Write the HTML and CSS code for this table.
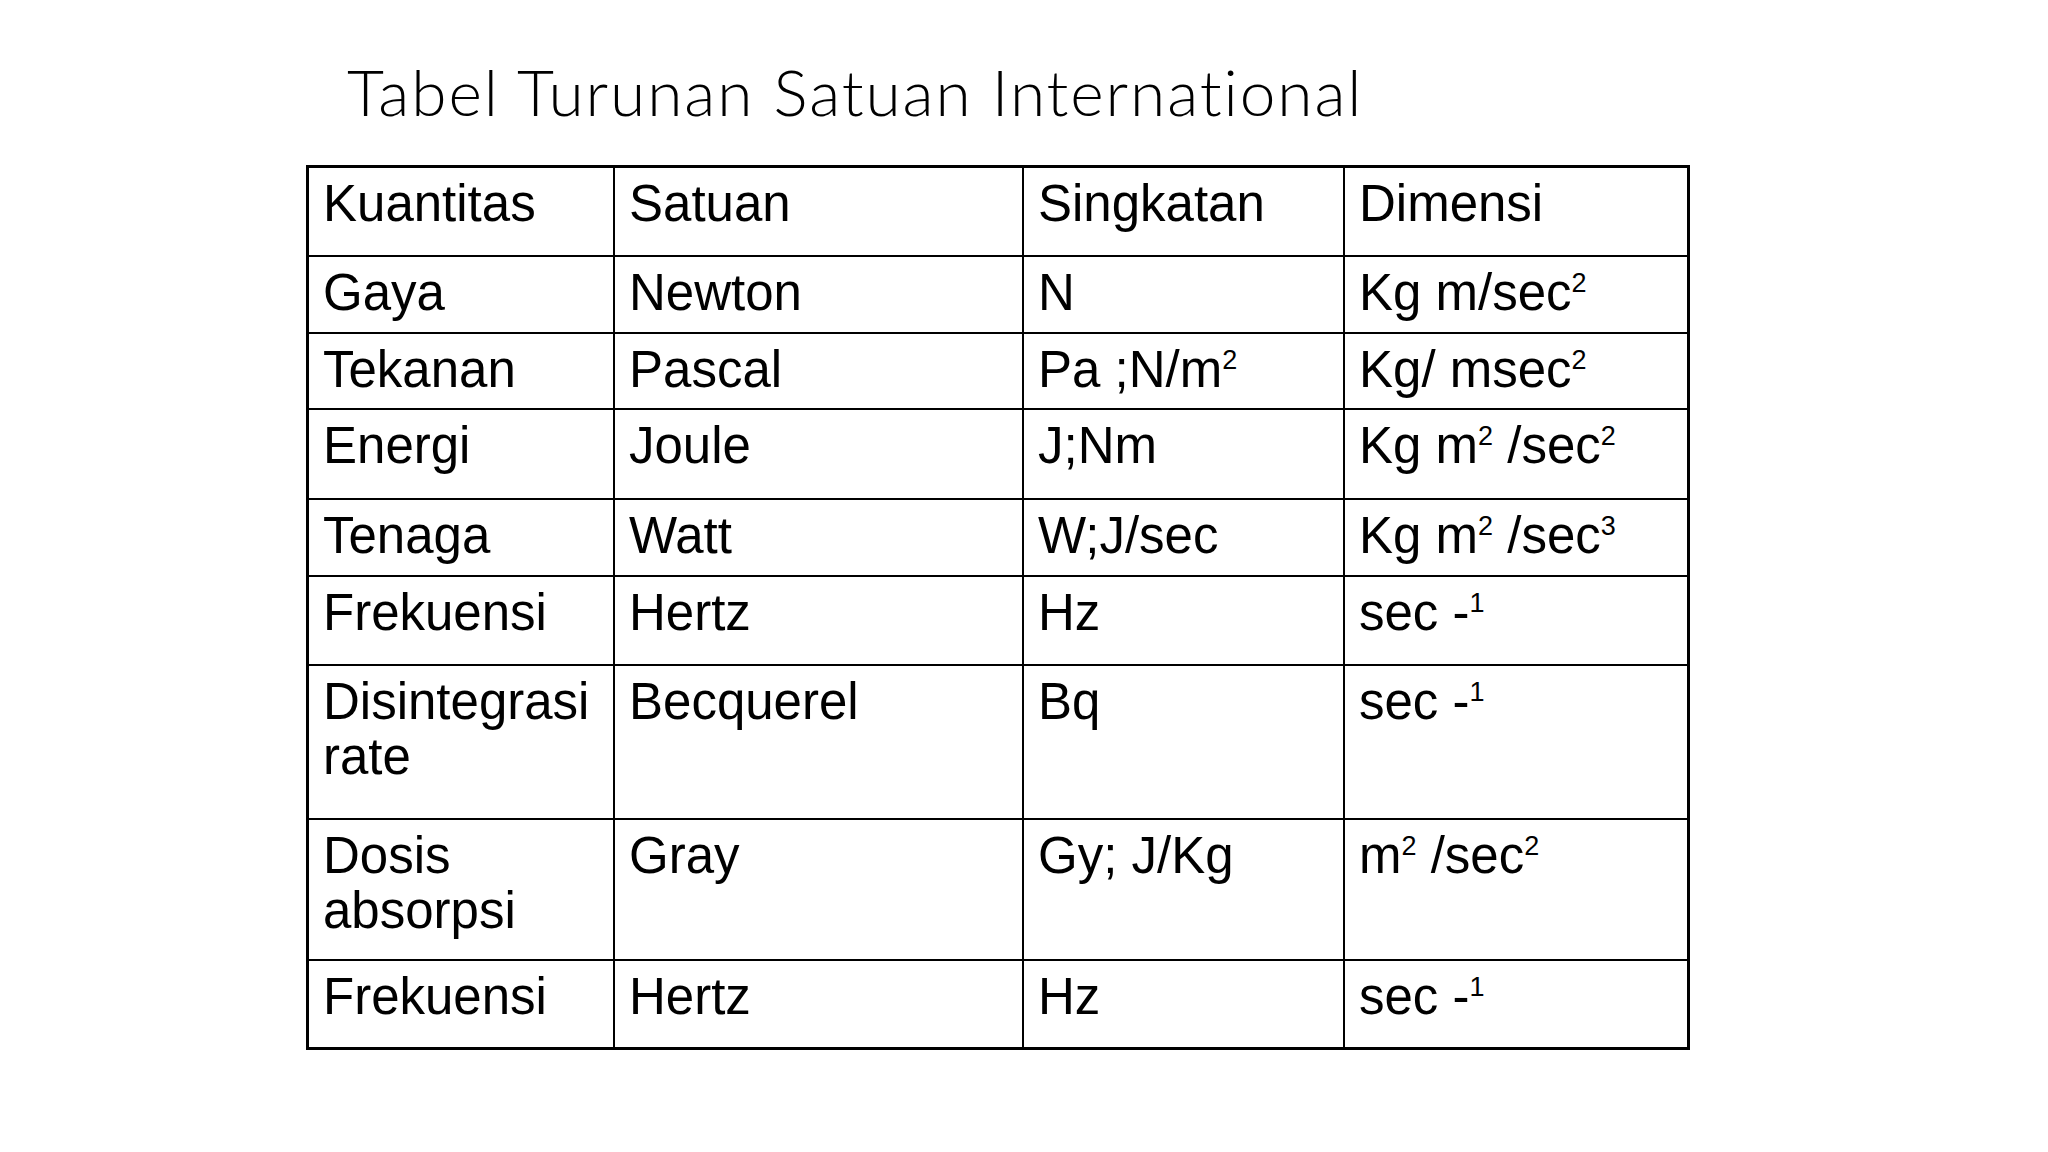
FILE: index.html
```html
<!DOCTYPE html>
<html lang="id">
<head>
<meta charset="utf-8">
<title>Tabel Turunan Satuan International</title>
<link rel="stylesheet" href="styles.css">
</head>
<body>
<main class="slide">
  <h1 class="title">Tabel Turunan Satuan International</h1>
  <div class="table">
    <div class="cell">Kuantitas</div><div class="cell">Satuan</div><div class="cell">Singkatan</div><div class="cell">Dimensi</div>
    <div class="cell">Gaya</div><div class="cell">Newton</div><div class="cell">N</div><div class="cell">Kg m/sec<sup>2</sup></div>
    <div class="cell">Tekanan</div><div class="cell">Pascal</div><div class="cell">Pa ;N/m<sup>2</sup></div><div class="cell">Kg/ msec<sup>2</sup></div>
    <div class="cell">Energi</div><div class="cell">Joule</div><div class="cell">J;Nm</div><div class="cell">Kg m<sup>2</sup> /sec<sup>2</sup></div>
    <div class="cell">Tenaga</div><div class="cell">Watt</div><div class="cell">W;J/sec</div><div class="cell">Kg m<sup>2</sup> /sec<sup>3</sup></div>
    <div class="cell">Frekuensi</div><div class="cell">Hertz</div><div class="cell">Hz</div><div class="cell">sec -<sup>1</sup></div>
    <div class="cell">Disintegrasi rate</div><div class="cell">Becquerel</div><div class="cell">Bq</div><div class="cell">sec -<sup>1</sup></div>
    <div class="cell">Dosis absorpsi</div><div class="cell">Gray</div><div class="cell">Gy; J/Kg</div><div class="cell">m<sup>2</sup> /sec<sup>2</sup></div>
    <div class="cell">Frekuensi</div><div class="cell">Hertz</div><div class="cell">Hz</div><div class="cell">sec -<sup>1</sup></div>
  </div>
</main>
</body>
</html>
```

FILE: styles.css
```css
html, body {
  margin: 0;
  padding: 0;
  background: #ffffff;
}

.slide {
  width: 2048px;
  height: 1152px;
  box-sizing: border-box;
  padding: 60px 0 0 306px;
  background: #ffffff;
  color: #000000;
}

.title {
  margin: 0 0 41px 41px;
  font-family: Lato, "Open Sans", sans-serif;
  font-weight: 300;
  font-size: 64px;
  line-height: 64px;
  letter-spacing: 1.9px;
  color: #000000;
  white-space: nowrap;
}

.table {
  display: grid;
  grid-template-columns: 304px 407px 319px 342px;
  grid-template-rows: 87px 75px 74px 88px 75px 87px 152px 139px 86px;
  gap: 2px;
  width: max-content;
  background: #000000;
  border: 3px solid #000000;
  font-family: "Liberation Sans", Arial, sans-serif;
  font-size: 51px;
  line-height: 55px;
}

.cell {
  background: #ffffff;
  padding: 8px 8px 0 14px;
  overflow: hidden;
}

.cell sup {
  font-size: 27px;
  line-height: 1;
  vertical-align: 18px;
}
```
